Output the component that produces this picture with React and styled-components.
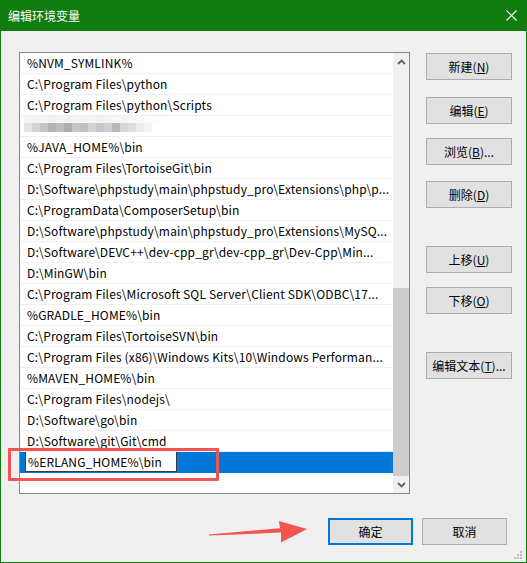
import React from 'react';
import styled, { createGlobalStyle } from 'styled-components';

const GlobalStyle = createGlobalStyle`
  html, body {
    margin: 0;
    padding: 0;
    background: #ffffff;
  }
  body {
    font-family: "Noto Sans CJK SC", "Noto Sans", sans-serif;
    font-size: 12px;
    color: #000;
  }
`;

const Window = styled.div`
  width: 527px;
  height: 563px;
  box-sizing: border-box;
  display: flex;
  flex-direction: column;
  background: #f0f0f0;
  border: 1px solid #107c10;
  border-top: none;
  position: relative;
`;

const TitleBar = styled.div`
  height: 31px;
  flex-shrink: 0;
  background: #107c10;
  color: #ffffff;
  display: flex;
  align-items: center;
  justify-content: space-between;
  padding: 0 10px 0 8px;
  margin: 0 -1px;
  font-size: 12px;
`;

const Body = styled.div`
  flex: 1;
  padding: 21px 14px 0 18px;
  display: flex;
  flex-direction: column;
`;

const Main = styled.div`
  display: flex;
  align-items: flex-start;
  gap: 16px;
`;

const ListBox = styled.div`
  position: relative;
  width: 392px;
  height: 442px;
  box-sizing: border-box;
  border: 1px solid #828790;
  background: #ffffff;
  display: flex;
`;

const Rows = styled.div`
  flex: 1;
  min-width: 0;
  display: flex;
  flex-direction: column;
`;

const Row = styled.div`
  height: 21px;
  box-sizing: border-box;
  border-bottom: 1px solid ${(p) => (p.$selected ? '#0078d7' : '#f0f0f0')};
  background: ${(p) => (p.$selected ? '#0078d7' : '#ffffff')};
  padding: 0 2px 0 ${(p) => (p.$selected ? '5px' : '7px')};
  line-height: 20px;
  letter-spacing: 0.15px;
  white-space: nowrap;
  overflow: hidden;
`;

const Smudge = styled.div`
  display: flex;
  flex-direction: column;
  margin-left: -3px;
  filter: blur(0.6px);
`;

const SmudgeLine = styled.div`
  display: flex;
  height: ${(p) => p.$h}px;
`;

const SmudgeCell = styled.span`
  width: 8px;
  height: 100%;
  background: ${(p) => p.$c};
`;

const EditBox = styled.div`
  width: 152px;
  height: 21px;
  box-sizing: border-box;
  border: 1px solid #3a3a3a;
  background: #ffffff;
  padding-left: 2px;
  line-height: 19px;
  margin-top: -1px;
`;

const ScrollBar = styled.div`
  width: 16px;
  background: #f0f0f0;
  display: flex;
  flex-direction: column;
`;

const ScrollArrow = styled.div`
  height: 17px;
  display: flex;
  align-items: center;
  justify-content: center;
`;

const Track = styled.div`
  flex: 1;
  display: flex;
  flex-direction: column;
  justify-content: flex-end;
`;

const Thumb = styled.div`
  height: 188px;
  background: #cdcdcd;
`;

const Highlight = styled.div`
  position: absolute;
  left: -12px;
  top: 395px;
  width: 211px;
  height: 33px;
  box-sizing: border-box;
  border: 3px solid #f25454;
  border-radius: 1px;
  pointer-events: none;
`;

const Buttons = styled.div`
  display: flex;
  flex-direction: column;
  width: 86px;
`;

const Button = styled.button`
  width: ${(p) => p.$w || 86}px;
  height: 27px;
  margin-top: ${(p) => p.$top || 0}px;
  box-sizing: border-box;
  border: ${(p) => (p.$default ? '2px solid #0078d7' : '1px solid #adadad')};
  background: #e1e1e1;
  font-family: inherit;
  font-size: 12px;
  color: #000;
  padding: 0;
  line-height: 1;
  display: flex;
  align-items: center;
  justify-content: center;
`;

const Footer = styled.div`
  display: flex;
  align-items: center;
  justify-content: flex-end;
  gap: 9px;
  margin-top: 24px;
  padding-right: 5px;
`;

const Pointer = styled.svg`
  margin-right: 11px;
  display: block;
`;

const Grip = styled.svg`
  position: absolute;
  right: 3px;
  bottom: 2px;
`;

// the list shows long entries already shortened with "..."
const paths = [
  '%NVM_SYMLINK%',
  'C:\\Program Files\\python',
  'C:\\Program Files\\python\\Scripts',
  null,
  '%JAVA_HOME%\\bin',
  'C:\\Program Files\\TortoiseGit\\bin',
  'D:\\Software\\phpstudy\\main\\phpstudy_pro\\Extensions\\php\\p...',
  'C:\\ProgramData\\ComposerSetup\\bin',
  'D:\\Software\\phpstudy\\main\\phpstudy_pro\\Extensions\\MySQ...',
  'D:\\Software\\DEVC++\\dev-cpp_gr\\dev-cpp_gr\\Dev-Cpp\\Min...',
  'D:\\MinGW\\bin',
  'C:\\Program Files\\Microsoft SQL Server\\Client SDK\\ODBC\\17...',
  '%GRADLE_HOME%\\bin',
  'C:\\Program Files\\TortoiseSVN\\bin',
  'C:\\Program Files (x86)\\Windows Kits\\10\\Windows Performan...',
  '%MAVEN_HOME%\\bin',
  'C:\\Program Files\\nodejs\\',
  'D:\\Software\\go\\bin',
  'D:\\Software\\git\\Git\\cmd',
];

const hazeTop = ['#f6f6f6', '#f3f3f3', '#f5f5f5', '#f2f2f2', '#f4f4f4', '#f1f1f1', '#f5f5f5', '#f3f3f3', '#f6f6f6', '#f2f2f2', '#f4f4f4', '#f7f7f7', '#f3f3f3', '#f8f8f8', '#fafafa', '#fbfbfb', '#fdfdfd', '#fefefe'];
const hazeBottom = ['#e4e4e4', '#d3d3d3', '#c4c4c4', '#b4b4b4', '#bdbdbd', '#aeaeae', '#c8c8c8', '#c0c0c0', '#d2d2d2', '#c6c6c6', '#cfcfcf', '#b8b8b8', '#d6d6d6', '#dedede', '#ececec', '#f5f5f5'];

const sideButtons = [
  { label: '新建', key: 'N', top: 1 },
  { label: '编辑', key: 'E', top: 17 },
  { label: '浏览', key: 'B', top: 14, more: true },
  { label: '删除', key: 'D', top: 16 },
  { label: '上移', key: 'U', top: 38 },
  { label: '下移', key: 'O', top: 14 },
  { label: '编辑文本', key: 'T', top: 38, more: true },
];

function Chevron({ down }) {
  return (
    <svg width="9" height="6" viewBox="0 0 9 6">
      <polyline
        points={down ? '1,1 4.5,4.5 8,1' : '1,5 4.5,1.5 8,5'}
        fill="none"
        stroke="#606060"
        strokeWidth="1.8"
      />
    </svg>
  );
}

export default function App() {
  return (
    <>
      <GlobalStyle />
      <Window>
        <TitleBar>
          <span>编辑环境变量</span>
          <svg width="11" height="11" viewBox="0 0 11 11">
            <path d="M0.5 0.5 L10.5 10.5 M10.5 0.5 L0.5 10.5" stroke="#ffffff" strokeWidth="1.1" />
          </svg>
        </TitleBar>
        <Body>
          <Main>
            <ListBox>
              <Rows>
                {paths.map((p, i) =>
                  p === null ? (
                    <Row key={i}>
                      <Smudge>
                        <SmudgeLine $h={7}>
                          {hazeTop.map((c, j) => (
                            <SmudgeCell key={j} $c={c} />
                          ))}
                        </SmudgeLine>
                        <SmudgeLine $h={9}>
                          {hazeBottom.map((c, j) => (
                            <SmudgeCell key={j} $c={c} />
                          ))}
                        </SmudgeLine>
                      </Smudge>
                    </Row>
                  ) : (
                    <Row key={i}>{p}</Row>
                  )
                )}
                <Row $selected>
                  <EditBox>%ERLANG_HOME%\bin</EditBox>
                </Row>
              </Rows>
              <ScrollBar>
                <ScrollArrow>
                  <Chevron />
                </ScrollArrow>
                <Track>
                  <Thumb />
                </Track>
                <ScrollArrow>
                  <Chevron down />
                </ScrollArrow>
              </ScrollBar>
              <Highlight />
            </ListBox>
            <Buttons>
              {sideButtons.map((b) => (
                <Button key={b.key} $top={b.top}>
                  {b.label}(<u>{b.key}</u>){b.more ? '...' : ''}
                </Button>
              ))}
            </Buttons>
          </Main>
          <Footer>
            <Pointer width="100" height="24" viewBox="0 0 100 24">
              <path d="M1 14.6 L72 8.2 L71 1 L99 9 L73 22.5 L73 12.6 L1 15.6 Z" fill="#f45454" />
            </Pointer>
            <Button $w={85} $default>确定</Button>
            <Button $w={85}>取消</Button>
          </Footer>
        </Body>
        <Grip width="10" height="10" viewBox="0 0 10 10">
          <g fill="#bcbcbc">
            <rect x="7" y="1" width="2" height="2" />
            <rect x="4" y="4" width="2" height="2" />
            <rect x="7" y="4" width="2" height="2" />
            <rect x="1" y="7" width="2" height="2" />
            <rect x="4" y="7" width="2" height="2" />
            <rect x="7" y="7" width="2" height="2" />
          </g>
        </Grip>
      </Window>
    </>
  );
}
